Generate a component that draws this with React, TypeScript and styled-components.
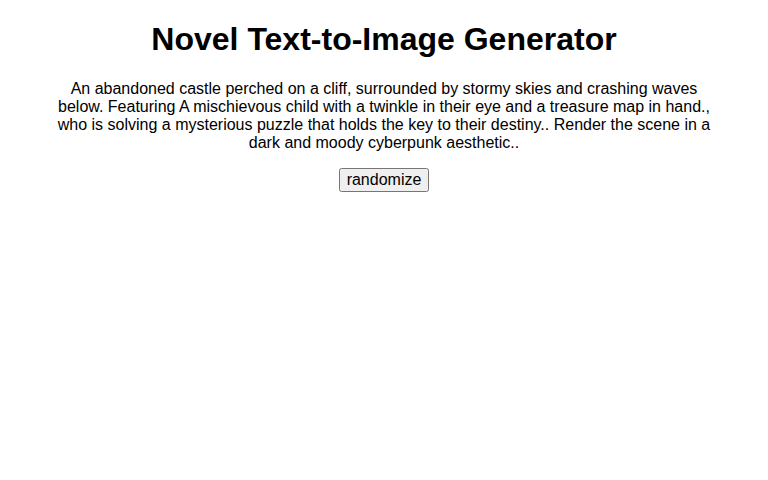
import React, { useState } from "react";
import styled, { createGlobalStyle } from "styled-components";

const GlobalStyle = createGlobalStyle`
    body {
        margin: 8px;
        background: #fff;
        font-family: "Liberation Sans", Arial, sans-serif;
        color: #000;
    }
`;

const Page = styled.main`
    display: flex;
    flex-direction: column;
    align-items: center;
    text-align: center;
`;

const Title = styled.h1`
    font-size: 32px;
    font-weight: bold;
    margin: 13px 0 22px;
`;

const Prompt = styled.p`
    max-width: 660px;
    margin: 0 0 16px;
    font-size: 16px;
    line-height: 18px;
`;

const Button = styled.button`
    font-family: "Liberation Sans", Arial, sans-serif;
    font-size: 16px;
    padding: 1px 6px;
`;

const subjects = [
    "A mischievous child with a twinkle in their eye and a treasure map in hand.",
    "A weary knight in battered armor, clutching a glowing sword.",
];
const actions = [
    "who is solving a mysterious puzzle that holds the key to their destiny.",
    "who is searching for a long-lost friend in the ruins.",
];
const settings = [
    "An abandoned castle perched on a cliff, surrounded by stormy skies and crashing waves below.",
    "A neon-lit city street slick with rain at midnight.",
];
const styles = ["a dark and moody cyberpunk aesthetic.", "a soft watercolor style."];

const pick = (list: string[]) => list[Math.floor(Math.random() * list.length)];

const App: React.FC = () => {
    const [prompt, setPrompt] = useState(
        `${settings[0]} Featuring ${subjects[0]}, ${actions[0]}. Render the scene in ${styles[0]}.`
    );
    const randomize = () => {
        setPrompt(`${pick(settings)} Featuring ${pick(subjects)}, ${pick(actions)}. Render the scene in ${pick(styles)}.`);
    };
    return (
        <Page>
            <GlobalStyle />
            <Title>Novel Text-to-Image Generator</Title>
            <Prompt>{prompt}</Prompt>
            <Button onClick={randomize}>randomize</Button>
        </Page>
    );
};

export default App;
